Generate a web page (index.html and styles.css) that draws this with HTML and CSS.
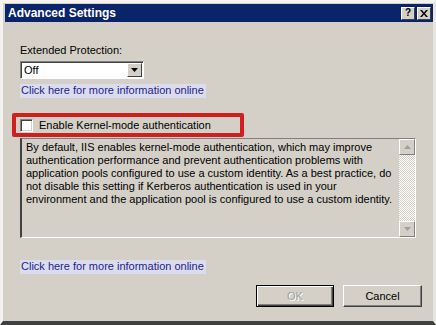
FILE: index.html
```html
<!DOCTYPE html>
<html lang="en">
<head>
    <meta charset="UTF-8">
    <title>Advanced Settings</title>
    <link rel="stylesheet" href="styles.css">
</head>
<body>
    <div class="window">
        <div class="title-bar">
            <span class="title">Advanced Settings</span>
            <div class="title-buttons">
                <div class="caption-btn">?</div>
                <div class="caption-btn">
                    <svg width="8" height="7" viewBox="0 0 8 7"><path d="M0 0h2l2 2.5L6 0h2L5 3.5 8 7H6L4 4.5 2 7H0l3-3.5z" fill="#000"/></svg>
                </div>
            </div>
        </div>

        <div class="content">
            <div class="field-label">Extended Protection:</div>
            <div class="select">
                <span class="select-value">Off</span>
                <div class="select-btn">
                    <svg width="7" height="4" viewBox="0 0 7 4"><path d="M0 0h7L3.5 4z" fill="#000"/></svg>
                </div>
            </div>
            <a class="info-link" href="#">Click here for more information online</a>

            <div class="highlight">
                <div class="checkbox"></div>
                <span class="check-label">Enable Kernel-mode authentication</span>
            </div>

            <div class="description">
                <div class="description-text">By default, IIS enables kernel-mode authentication, which may improve authentication performance and prevent authentication problems with application pools configured to use a custom identity. As a best practice, do not disable this setting if Kerberos authentication is used in your environment and the application pool is configured to use a custom identity.</div>
                <div class="scrollbar">
                    <div class="scroll-btn">
                        <svg width="7" height="4" viewBox="0 0 7 4"><path d="M0 4h7L3.5 0z" fill="#a0a0a0"/></svg>
                    </div>
                    <div class="scroll-track"></div>
                    <div class="scroll-btn">
                        <svg width="7" height="4" viewBox="0 0 7 4"><path d="M0 0h7L3.5 4z" fill="#a0a0a0"/></svg>
                    </div>
                </div>
            </div>

            <a class="info-link info-link-bottom" href="#">Click here for more information online</a>

            <div class="buttons">
                <div class="button button-default disabled">OK</div>
                <div class="button">Cancel</div>
            </div>
        </div>
    </div>
</body>
</html>
```

FILE: styles.css
```css
html, body {
    margin: 0;
    padding: 0;
}
body {
    width: 436px;
    height: 325px;
    overflow: hidden;
    background-color: #d4d0c8;
    font-family: 'Liberation Sans', Arial, sans-serif;
    font-size: 11px;
    color: #000;
}
.window {
    box-sizing: border-box;
    width: 436px;
    height: 325px;
    background-color: #d4d0c8;
    border-top: 3px solid #f4f3ef;
    border-left: 3px solid #f4f3ef;
    border-right: 3px solid #e8e6e0;
    border-bottom: 4px solid #404040;
    display: flex;
    flex-direction: column;
}
.title-bar {
    height: 18px;
    margin: 1px 0 0 2px;
    background-color: #0a246a;
    display: flex;
    align-items: center;
    justify-content: space-between;
    padding: 0 2px 0 3px;
}
.title {
    color: #fff;
    font-weight: bold;
    font-size: 12px;
}
.title-buttons {
    display: flex;
    gap: 2px;
}
.caption-btn {
    box-sizing: border-box;
    width: 14px;
    height: 13px;
    background-color: #d4d0c8;
    border-top: 1px solid #fff;
    border-left: 1px solid #fff;
    border-right: 1px solid #404040;
    border-bottom: 1px solid #404040;
    display: flex;
    align-items: center;
    justify-content: center;
    font-weight: bold;
    font-size: 10px;
    line-height: 1;
}
.content {
    flex: 1;
    padding: 22px 0 0 17px;
    display: flex;
    flex-direction: column;
    align-items: flex-start;
}
.field-label {
    line-height: 13px;
    height: 13px;
}
.select {
    box-sizing: border-box;
    margin-top: 4px;
    width: 124px;
    height: 18px;
    background-color: #fff;
    border-top: 1px solid #808080;
    border-left: 1px solid #808080;
    border-right: 1px solid #fff;
    border-bottom: 1px solid #fff;
    box-shadow: inset 1px 1px 0 #404040;
    display: flex;
    align-items: center;
    justify-content: space-between;
    padding: 0 1px 0 3px;
}
.select-btn {
    box-sizing: border-box;
    width: 15px;
    height: 14px;
    background-color: #d4d0c8;
    border-top: 1px solid #fff;
    border-left: 1px solid #fff;
    border-right: 1px solid #404040;
    border-bottom: 1px solid #404040;
    display: flex;
    align-items: center;
    justify-content: center;
}
.info-link {
    margin-top: 5px;
    color: #1c1c8c;
    text-decoration: none;
    background-color: #dcdcef;
    padding: 0 2px 1px 1px;
    line-height: 13px;
}
.highlight {
    box-sizing: border-box;
    margin: 15px 0 0 -8px;
    width: 232px;
    height: 24px;
    border: 4px solid #d01f1f;
    border-radius: 2px;
    display: flex;
    align-items: center;
    padding-left: 4px;
}
.checkbox {
    box-sizing: border-box;
    width: 13px;
    height: 13px;
    background-color: #fff;
    border-top: 1px solid #808080;
    border-left: 1px solid #808080;
    border-right: 1px solid #fff;
    border-bottom: 1px solid #fff;
    box-shadow: inset 1px 1px 0 #404040, inset -1px -1px 0 #d4d0c8;
}
.check-label {
    margin-left: 6px;
}
.description {
    box-sizing: border-box;
    width: 396px;
    height: 100px;
    border-top: 1px solid #808080;
    border-left: 2px solid #404040;
    border-right: 1px solid #fff;
    border-bottom: 1px solid #fff;
    display: flex;
    margin-top: 1px;
}
.description-text {
    flex: 1;
    padding: 2px 4px 0 4px;
    line-height: 13px;
}
.scrollbar {
    width: 16px;
    display: flex;
    flex-direction: column;
    background-color: #ebe9e5;
    background-image: repeating-conic-gradient(#fff 0 25%, #d4d0c8 0 50%);
    background-size: 2px 2px;
}
.scroll-btn {
    box-sizing: border-box;
    height: 16px;
    background-color: #d4d0c8;
    border-top: 1px solid #fff;
    border-left: 1px solid #fff;
    border-right: 1px solid #808080;
    border-bottom: 1px solid #808080;
    display: flex;
    align-items: center;
    justify-content: center;
}
.scroll-track {
    flex: 1;
}
.info-link-bottom {
    margin-top: 22px;
}
.buttons {
    align-self: flex-end;
    margin: 11px 11px 0 0;
    display: flex;
    gap: 9px;
}
.button {
    box-sizing: border-box;
    width: 79px;
    height: 22px;
    background-color: #d4d0c8;
    border-top: 1px solid #fff;
    border-left: 1px solid #fff;
    border-right: 1px solid #404040;
    border-bottom: 1px solid #404040;
    box-shadow: inset -1px -1px 0 #808080;
    display: flex;
    align-items: center;
    justify-content: center;
}
.button-default {
    width: 78px;
    border: 1px solid #000;
    box-shadow: inset 1px 1px 0 #fff, inset -1px -1px 0 #404040, inset -2px -2px 0 #808080;
}
.disabled {
    color: #a0a0a0;
    text-shadow: 1px 1px 0 #fff;
}
```
